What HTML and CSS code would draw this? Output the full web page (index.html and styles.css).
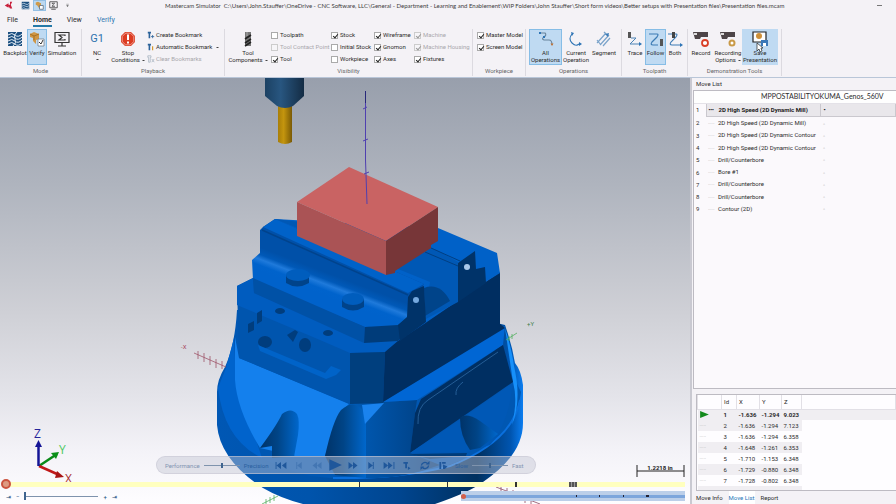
FILE: index.html
```html
<!DOCTYPE html>
<html lang="en">
<head>
<meta charset="utf-8">
<title>Mastercam Simulator</title>
<link rel="stylesheet" href="styles.css">
</head>
<body>
<div class="app">
  <header class="titlebar">
    <div class="quick">
      <svg class="qi" viewBox="0 0 12 12"><path d="M1 6l5-3v2h2V1h3L9 5l2 5H8L6 7v2z" fill="#c8203c"/></svg>
      <button class="qb" aria-label="Backplot"><svg class="qi" viewBox="0 0 12 12"><path d="M1 1h10v10H1z" fill="#1d5080"/><path d="M1 4q3-2 5 0t5-1M1 7q3-2 5 0t5-1M1 10q3-2 5 0t5-1" stroke="#dbe7f2" fill="none"/></svg></button>
      <button class="qb on" aria-label="Verify"><svg class="qi" viewBox="0 0 12 12"><path d="M1 2l3-1 4 2v5L5 9 3 6 1 5z" fill="#cf9a4a"/><path d="M6 6h5v5H6z" fill="#fff" stroke="#567"/></svg></button>
      <button class="qb" aria-label="Simulation"><svg class="qi" viewBox="0 0 12 12"><path d="M1 1h10v8H1zM3 11h6M8 3H4l2 2-2 2h4" fill="none" stroke="#333"/></svg></button>
      <button class="qb" aria-label="Customize"><svg class="qi small" viewBox="0 0 12 12"><path d="M3 3h6M4 6h4L6 9z" fill="#555" stroke="#555"/></svg></button>
    </div>
    <h1 class="title">Mastercam Simulator&nbsp; C:\Users\John.Stauffer\OneDrive - CNC Software, LLC\General - Department - Learning and Enablement\WIP Folders\John Stauffer\Short form videos\Better setups with Presentation files\Presentation files.mcam</h1>
    <button class="minimize" aria-label="Minimize"></button>
  </header>

  <nav class="tabs">
    <a href="#file">File</a><a href="#home" class="active">Home</a><a href="#view">View</a><a href="#verify" class="context">Verify</a>
  </nav>

  <div class="ribbon">
    <section class="group g-mode">
      <div class="tools">
        <button class="big"><svg viewBox="0 0 16 16"><path d="M1 1h14v14H1z" fill="#1c4f80"/><path d="M1 4q4-3 7 0t7-1M1 7q4-3 7 0t7-1M1 10q4-3 7 0t7-1M1 13q4-3 7 0t7-1M10 1q-4 3-2 7t-2 7" stroke="#e6eef6" fill="none"/></svg><span>Backplot</span></button>
        <button class="big on"><svg viewBox="0 0 16 16"><path d="M1 3l4-2 5 2v5l-3 1v4l-3-3V7L1 6z" fill="#cf9645"/><path d="M1 3l4 2 5-2M5 5v4" stroke="#a87022" fill="none"/><path d="M9 8h6v7H9z" fill="#fff" stroke="#6a7480" stroke-width=".7"/><path d="M10 11l2 2 2-4" stroke="#333" fill="none"/></svg><span>Verify</span></button>
        <button class="big"><svg viewBox="0 0 16 16"><path d="M1 1.500h14v10H1zM4 15h8M8 12v3M11 5V4H5l3 2.500L5 9h6V8" fill="none" stroke="#333" stroke-width="1.200"/></svg><span>Simulation</span></button>
      </div>
      <h2>Mode</h2>
    </section>
    <section class="group g-play">
      <div class="tools">
        <button class="big"><b class="g1">G1</b><span>NC<i class="caret below"></i></span></button>
        <button class="big"><svg viewBox="0 0 16 16"><path d="M5 1h6l4 4v6l-4 4H5l-4-4V5z" fill="#dc3c22"/><path d="M5.500 2.200h5l3.300 3.300v5l-3.300 3.300h-5l-3.300-3.300v-5z" fill="none" stroke="#fff" stroke-width=".5"/><path d="M8 3.500v5.500M8 10.500v2" stroke="#fff" stroke-width="2"/></svg><span>Stop<br>Conditions<i class="caret"></i></span></button>
        <div class="stack">
          <button class="line"><svg viewBox="0 0 10 10"><path d="M1 1h4v2H4v6H2V3H1z" fill="#2b6299"/><path d="M5 7h4M7 5v4" stroke="#2b6299"/></svg>Create Bookmark</button>
          <button class="line"><svg viewBox="0 0 10 10"><path d="M1 1h4v2H4v6H2V3H1z" fill="#2b6299"/><path d="M7 4v5" stroke="#d59a2e" stroke-width="1.500"/></svg>Automatic Bookmark<i class="caret wide"></i></button>
          <button class="line" disabled><svg viewBox="0 0 10 10"><path d="M1 1h4v2H4v6H2V3H1zM6 5l3 4M9 5L6 9" fill="none" stroke="#a9b5c2"/></svg>Clear Bookmarks</button>
        </div>
      </div>
      <h2>Playback</h2>
    </section>
    <section class="group g-vis">
      <div class="tools">
        <button class="big"><svg viewBox="0 0 16 16"><path d="M5 1h6v14H5z" fill="#777"/><path d="M5 8l6-4M5 12l6-4M5 15l6-4" stroke="#222" stroke-width="1.600"/><path d="M7 1v4" stroke="#aaa"/></svg><span>Tool<br>Components<i class="caret"></i></span></button>
        <div class="stack">
          <label><input type="checkbox">Toolpath</label>
          <label class="dim"><input type="checkbox" disabled>Tool Contact Point</label>
          <label><input type="checkbox" checked>Tool</label>
        </div>
        <div class="stack">
          <label><input type="checkbox" checked>Stock</label>
          <label><input type="checkbox">Initial Stock</label>
          <label><input type="checkbox">Workpiece</label>
        </div>
        <div class="stack">
          <label><input type="checkbox" checked>Wireframe</label>
          <label><input type="checkbox" checked>Gnomon</label>
          <label><input type="checkbox" checked>Axes</label>
        </div>
        <div class="stack">
          <label class="dim"><input type="checkbox" checked disabled>Machine</label>
          <label class="dim"><input type="checkbox" checked disabled>Machine Housing</label>
          <label><input type="checkbox" checked>Fixtures</label>
        </div>
      </div>
      <h2>Visibility</h2>
    </section>
    <section class="group g-work">
      <div class="tools">
        <div class="stack">
          <label><input type="checkbox" checked>Master Model</label>
          <label><input type="checkbox" checked>Screen Model</label>
        </div>
      </div>
      <h2>Workpiece</h2>
    </section>
    <section class="group g-ops">
      <div class="tools">
        <button class="big on"><svg viewBox="0 0 16 16"><path d="M2 2h5q2 2-1 4t0 3h5q3 0 3 5" fill="none" stroke="#68849c" stroke-width="1.100"/><path d="M1 1h2v2H1zM5 5h2v2H5z" fill="#2d74b5"/><path d="M12.500 12.500h3L14 15z" fill="#c07030"/></svg><span>All<br>Operations</span></button>
        <button class="big"><svg viewBox="0 0 16 16"><path d="M4 3Q0 8 4 12t7 1" fill="none" stroke="#2d74b5" stroke-width="1.100"/><path d="M3 1l3 1-2 3zM11 11l3 2-3 2z" fill="#2d74b5"/></svg><span>Current<br>Operation</span></button>
        <button class="big"><svg viewBox="0 0 16 16"><path d="M1 12L10 2M4 14l9-10M7 15l7-8M8 1l3 3M1 9l4 5" fill="none" stroke="#7aa3ca" stroke-width="1.200"/><path d="M9 3l4-1-1 4z" fill="#3c7cb8"/></svg><span>Segment</span></button>
      </div>
      <h2>Operations</h2>
    </section>
    <section class="group g-path">
      <div class="tools">
        <button class="big"><svg viewBox="0 0 16 16"><path d="M1 1h3v6H1z" fill="#555"/><path d="M4 7l5 0-6 6h10" fill="none" stroke="#4c83b5"/><path d="M12 11l3 2-3 2z" fill="#2d74b5"/></svg><span>Trace</span></button>
        <button class="big on"><svg viewBox="0 0 16 16"><path d="M1 3h8q2 0 0 3l-5 5q-2 3 1 3h5" fill="none" stroke="#3d7bb4" stroke-width="1.200"/><path d="M12 8h3v7h-3z" fill="#555"/></svg><span>Follow</span></button>
        <button class="big"><svg viewBox="0 0 16 16"><path d="M1 3h8q2 0 0 3l-5 5q-2 3 1 3h8" fill="none" stroke="#3d7bb4" stroke-width="1.100"/><path d="M5 1h3v6H5z" fill="#444"/><path d="M13 12l3 2-3 2z" fill="#2d74b5"/></svg><span>Both</span></button>
      </div>
      <h2>Toolpath</h2>
    </section>
    <section class="group g-demo">
      <div class="tools">
        <button class="big"><svg viewBox="0 0 16 16"><path d="M0 1h15v5H8L7 8H2z" fill="#4d4548"/><path d="M1 2h3v2H1z" fill="#ddd"/><circle cx="12" cy="12" r="3" fill="#fff" stroke="#d84028" stroke-width="1.800"/></svg><span>Record</span></button>
        <button class="big"><svg viewBox="0 0 16 16"><path d="M0 1h15v5H8L7 8H2z" fill="#4d4548"/><path d="M1 2h3v2H1z" fill="#ddd"/><circle cx="12" cy="12" r="2.500" fill="#fff" stroke="#c99a48" stroke-width="2"/></svg><span>Recording<br>Options<i class="caret"></i></span></button>
        <button class="big on plain"><svg viewBox="0 0 16 16"><path d="M1 1h13v10H1z" fill="#fff" stroke="#222" stroke-width="1.200"/><circle cx="7" cy="5" r="3" fill="#cf9038"/><path d="M9 9h7v6H9z" fill="#3b78b8"/><path d="M11 12h3v3h-3z" fill="#fff"/></svg><span>Save<br>Presentation</span>
          <svg class="pointer" viewBox="0 0 8 11"><path d="M1 1v8l2-2 1 3 2-1-1-3h2z" fill="#fff" stroke="#222" stroke-width=".7"/></svg></button>
      </div>
      <h2>Demonstration Tools</h2>
    </section>
  </div>

  <main class="work">
    <section class="viewport">
      <svg class="scene" viewBox="0 78 690 426" preserveAspectRatio="xMidYMin slice" role="img" aria-label="Vise and stock">
        <defs>
          <linearGradient id="bg" x1="0" y1="0" x2="0" y2="1"><stop offset="0" stop-color="#989fac"/><stop offset=".25" stop-color="#afb4be"/><stop offset=".55" stop-color="#cfd0d6"/><stop offset=".75" stop-color="#e4e4ea"/><stop offset=".88" stop-color="#f4f3f8"/><stop offset="1" stop-color="#fefdff"/></linearGradient>
          <linearGradient id="bowl" x1="217" x2="523" y1="0" y2="0" gradientUnits="userSpaceOnUse"><stop offset="0" stop-color="#0057b4"/><stop offset=".3" stop-color="#0054ac"/><stop offset=".6" stop-color="#00458f"/><stop offset=".85" stop-color="#00305f"/><stop offset=".96" stop-color="#0055b0"/><stop offset="1" stop-color="#0b7df0"/></linearGradient>
          <linearGradient id="holder"><stop offset="0" stop-color="#1c4163"/><stop offset=".4" stop-color="#285680"/><stop offset="1" stop-color="#142c44"/></linearGradient>
          <linearGradient id="cutter"><stop offset="0" stop-color="#a87e08"/><stop offset=".4" stop-color="#c4950e"/><stop offset="1" stop-color="#7a5a05"/></linearGradient>
          <linearGradient id="scoop"><stop offset="0" stop-color="#003368"/><stop offset=".45" stop-color="#004486"/><stop offset="1" stop-color="#0067cc"/></linearGradient>
          <linearGradient id="groove" x1="325" y1="272" x2="317" y2="293" gradientUnits="userSpaceOnUse"><stop offset="0" stop-color="#0050a8"/><stop offset=".3" stop-color="#0059b8"/><stop offset=".5" stop-color="#1f7adb"/><stop offset=".75" stop-color="#0063cc"/><stop offset="1" stop-color="#0062cb"/></linearGradient>
          <linearGradient id="mid"><stop offset="0" stop-color="#005cb8"/><stop offset="1" stop-color="#003c7c"/></linearGradient>
        </defs>
        <path d="M0 78h690v426H0z" fill="url(#bg)"/>

        <!-- rotary base -->
        <path d="M237 310Q235 345 225 367Q217 380 217 392V425Q220 460 263 488Q280 498 303 504H435Q470 492 483 482Q523 455 523 423V385Q521 370 515 363Q512 345 505 325L400 300z" fill="url(#bowl)"/>
        <path d="M218 390Q222 455 310 476Q375 485 440 468Q515 445 521 392L500 350 240 350z" fill="#0057b2"/>
        <path d="M218 388Q224 440 262 458L236 380 234 338 226 368z" fill="#0063cc"/>
        <path d="M333 478Q400 479 450 466Q512 442 520 400" fill="none" stroke="#0a70de" stroke-width="2"/>
        <path d="M505 328Q512 350 514 366Q522 400 512 425Q518 400 513 382z" fill="#1790fa"/>
        <path d="M235 337L239 358 349 404Q341 411 337 420L325 456H295L260 448Q237 410 235 380z" fill="#1480ed"/>
        <path d="M260 448Q277 425 282 414Q291 407 297 414Q300 420 298 435L294 457 272 458 272 446z" fill="url(#scoop)"/>
        <path d="M349 404L417 400 415 413 410 453 440 465Q400 480 366 478L362 410z" fill="url(#mid)"/>
        <path d="M325 456Q333 420 341 410Q352 400 361 408Q366 414 366 425V478L335 475z" fill="url(#scoop)"/>
        <path d="M362 405L384 403 365 424z" fill="#1a83ee"/>
        <path d="M505 326L383 402 417 400 503 345z" fill="#0066d4"/>
        <path d="M503 345L513 382 410 453 415 413 421 399z" fill="#002f62"/>
        <path d="M418 424Q417 407 428 400L498 352M456 395Q455 388 463 382" fill="none" stroke="#245d96"/>
        <path d="M513 383L460 420 410 453 467 452 490 445Q508 425 513 383z" fill="#0058b6"/>
        <path d="M460 418Q466 412 480 421L498 434 480 448 470 450Q460 436 460 418z" fill="url(#scoop)"/>
        <path d="M410 454L467 453 466 456 430 459z" fill="#003c7a"/>

        <!-- lower block -->
        <path d="M237 286L253 278 400 320 385 352 350 404 239 358z" fill="#0055ae"/>
        <path d="M237 286L253 278 254 293 364 340 398 341 385 352 350 353 320 340 237 305z" fill="#005cbf"/>
        <path d="M350 353L385 352 383 403 350 404z" fill="#003f7e"/>
        <path d="M500 272L500 324 505 328 383 402 385 352 398 341 400 326 458 300z" fill="#002e61"/>
        <g fill="#003d7d">
          <path d="M257 313l5-3v11l-5 3zM248 324l6-3v9l-6 3z"/>
          <ellipse cx="280" cy="311" rx="5" ry="3"/><ellipse cx="328" cy="333" rx="5" ry="3"/>
          <ellipse cx="265" cy="342" rx="7" ry="6"/><ellipse cx="305" cy="345" rx="6" ry="7"/>
          <path d="M287 335l8-5 3 2-5 10z"/>
        </g>
        <path d="M258 345L325 373 331 366 341 370 336 375 326 379 260 351z" fill="#0063c8"/>

        <!-- vise body -->
        <path d="M275 219L438 228 497 253 500 273 484 283 424 324 398 341 300 290z" fill="#0061c8"/>
        <path d="M275 219L430 282 424 320 458 302 458 262 437 250 390 233z" fill="#0058b5"/>
        <path d="M424 288Q440 282 450 301L425 316z" fill="#00448a"/>
        <path d="M431 248L460 261M425 252L458 266" stroke="#003f82" fill="none"/>
        <path d="M252 260L260 253 260 230 263 227 275 219 424 284 408 318 398 325 365 327 253 280z" fill="url(#groove)"/>
        <path d="M263 227L275 219 424 284 408 293z" fill="#0062c9"/>
        <path d="M262 230L408 295" stroke="#00438c" stroke-width="1.500"/>
        <path d="M253 278L365 327 364 343 254 293z" fill="#0051a6"/>
        <path d="M365 327L398 325 408 317 425 317 398 341 364 343z" fill="#003c7a"/>
        <path d="M408 297L412 291 424 286 426 322 400 341 398 325 407 317z" fill="#003369"/>
        <path d="M458 263L475 251 476 269 485 267 486 283 458 302z" fill="#003369"/>
        <circle cx="416" cy="300" r="3" fill="#75a9df"/><circle cx="467" cy="267" r="3" fill="#a9c8ea"/>
        <g><path d="M286 275v8q11 7 23 0v-8z" fill="#00438a"/><ellipse cx="298" cy="275" rx="12" ry="6" fill="#005dbd"/>
        <path d="M342 299v8q11 7 22 0v-8z" fill="#00438a"/><ellipse cx="353" cy="299" rx="11" ry="6" fill="#005dbd"/></g>

        <!-- stock -->
        <path d="M349 167L438 207 386 241 297 202z" fill="#c96363"/>
        <path d="M297 202L386 241V275L297 236z" fill="#aa5355"/>
        <path d="M386 241L438 207V241L431 245V248L395 271V273L386 275z" fill="#773638"/>

        <!-- tool -->
        <path d="M278 104h14v38q-7 4-14 0z" fill="url(#cutter)"/>
        <path d="M265 78h39v18l-11 10q-8 4-16 0l-12-10z" fill="url(#holder)"/>

        <!-- axes -->
        <path d="M365.500 91V160L367 204M363 109l4-2M363 141l5-2M364 174l5-2" stroke="#5040b0" stroke-width="1" fill="none"/>
        <path d="M365 91h1v12h-1z" fill="#28287a"/>
        <path d="M194 353L226 367M198 351v8M204 353v9M210 356v9M216 359v9M222 361v8" stroke="#a0566a" stroke-width=".8" fill="none"/>
        <path d="M496 487L540 504M501 486v6M507 488v7M513 490v8M519 493v8M525 495v8M531 497v7" stroke="#8d4b64" stroke-width=".8" fill="none"/>
        <path d="M262 504L278 496M266 499v5M270 497v6M274 495v6M506 340L517 333M509 336v5M512 334v5" stroke="#54b060" stroke-width=".8" fill="none"/>
        <text x="181" y="349" class="axis" fill="#a84860">-X</text><text x="527" y="326" class="axis" fill="#3f7d48">+Y</text>
        <path d="M39 466L57 454" stroke="#0a8a18" stroke-width="2.500"/><path d="M51 453l8-1-3 7z" fill="#0a9018"/>
        <path d="M39 466L57 474" stroke="#c01818" stroke-width="2.500"/><path d="M57 471l7 6-9 1z" fill="#a81414"/>
        <path d="M38.500 466V446" stroke="#141496" stroke-width="2.500"/><path d="M35 447l3.500-7 3.500 7z" fill="#141496"/>
        <text x="34" y="438" class="gnomon" fill="#24249a">Z</text><text x="59" y="454" class="gnomon" fill="#4cc860">Y</text><text x="65" y="483" class="gnomon" fill="#a83030">X</text>
        <path d="M637 471H684M637 465v12M684 465v12" stroke="#222" fill="none"/>
        <text x="660" y="470" text-anchor="middle" class="scale">1.2218 in</text>
      </svg>

      <div class="overlay">
        <div class="player">
          <label class="speed">Performance<input type="range" aria-label="Performance to precision" value="50"><span>Precision</span></label>
          <div class="transport">
            <button aria-label="First"><svg viewBox="0 0 14 10"><path d="M1 1h1v8H1zM7 1v8L2 5zM13 1v8L8 5z"/></svg></button>
            <button aria-label="Previous" class="faint"><svg viewBox="0 0 14 10"><path d="M4 1h1v8H4zM10 1v8L5 5z"/></svg></button>
            <button aria-label="Rewind" class="faint"><svg viewBox="0 0 14 10"><path d="M7 1v8L2 5zM12 1v8L7 5z"/></svg></button>
            <button aria-label="Play"><svg viewBox="0 0 14 10" class="play"><path d="M2 0l11 5-11 5z"/></svg></button>
            <button aria-label="Forward"><svg viewBox="0 0 14 10"><path d="M2 1v8l5-4zM7 1v8l5-4z"/></svg></button>
            <button aria-label="Next"><svg viewBox="0 0 14 10"><path d="M4 1v8l5-4zM9 1h1v8H9z"/></svg></button>
            <button aria-label="Last"><svg viewBox="0 0 14 10"><path d="M1 1v8l5-4zM6 1v8l5-4zM12 1h1v8h-1z"/></svg></button>
            <button aria-label="Next tool"><svg viewBox="0 0 14 10"><path d="M3 1h5v2H7v5H5V3H3zM8 6l3 2-3 2z"/></svg></button>
            <button aria-label="Loop"><svg viewBox="0 0 14 10"><path d="M10 3A4 4 0 0 0 3 5M4 7a4 4 0 0 0 7-2" fill="none" stroke="#1f579b" stroke-width="1.500"/><path d="M8 4h4V0zM6 6H2v4z"/></svg></button>
            <button aria-label="Bookmark"><svg viewBox="0 0 14 10"><path d="M3 1h2v8H3zM6 1h4v2H6zM7 4l5 2-3 3H7z"/></svg></button>
          </div>
          <label class="speed"><span>Slow</span><input type="range" aria-label="Playback speed" value="50">Fast</label>
        </div>
        <div class="timeline"><i class="knob"></i><i class="mark m1"></i><i class="mark m2"></i><i class="mark m3"></i><i class="mark m4"></i></div>
        <div class="foot">
          <label class="zoombar"><span>⇥</span><span>−</span><input type="range" aria-label="Timeline zoom" value="0"><span>+</span><span>⇥</span></label>
          <div class="segment"><i class="dot"></i><i></i><i></i><i></i><i class="last"></i></div>
        </div>
      </div>
    </section>

    <aside class="panel">
      <h2>Move List</h2>
      <div class="moves">
        <table>
          <colgroup><col class="c-num"><col class="c-name"><col></colgroup>
          <thead><tr><th></th><th colspan="2">MPPOSTABILITYOKUMA_Genos_560V</th></tr></thead>
          <tbody>
            <tr class="sel"><td>1</td><td><i>•••</i>2D High Speed (2D Dynamic Mill)</td><td>•</td></tr>
            <tr><td>2</td><td><i>·····</i>2D High Speed (2D Dynamic Mill)</td><td>◦</td></tr>
            <tr><td>3</td><td><i>·····</i>2D High Speed (2D Dynamic Contour</td><td>◦</td></tr>
            <tr><td>4</td><td><i>·····</i>2D High Speed (2D Dynamic Contour</td><td>◦</td></tr>
            <tr><td>5</td><td><i>·····</i>Drill/Counterbore</td><td>◦</td></tr>
            <tr><td>6</td><td><i>·····</i>Bore #1</td><td>◦</td></tr>
            <tr><td>7</td><td><i>·····</i>Drill/Counterbore</td><td>◦</td></tr>
            <tr><td>8</td><td><i>·····</i>Drill/Counterbore</td><td>◦</td></tr>
            <tr><td>9</td><td><i>·····</i>Contour (2D)</td><td>◦</td></tr>
          </tbody>
        </table>
      </div>
      <div class="points">
        <table>
          <thead><tr><th></th><th>Id</th><th>X</th><th>Y</th><th>Z</th><th></th></tr></thead>
          <tbody>
            <tr class="sel"><td><svg viewBox="0 0 10 8"><path d="M0 0l10 4-10 4z" fill="#138a1c"/></svg></td><td>1</td><td>-1.636</td><td>-1.294</td><td>9.023</td><td></td></tr>
            <tr><td>·····</td><td>2</td><td>-1.636</td><td>-1.294</td><td>7.123</td><td></td></tr>
            <tr><td>·····</td><td>3</td><td>-1.636</td><td>-1.294</td><td>6.358</td><td></td></tr>
            <tr><td>·····</td><td>4</td><td>-1.648</td><td>-1.261</td><td>6.353</td><td></td></tr>
            <tr><td>·····</td><td>5</td><td>-1.710</td><td>-1.153</td><td>6.348</td><td></td></tr>
            <tr><td>·····</td><td>6</td><td>-1.729</td><td>-0.880</td><td>6.348</td><td></td></tr>
            <tr><td>·····</td><td>7</td><td>-1.728</td><td>-0.802</td><td>6.348</td><td></td></tr>
            <tr><td>·····</td><td>8</td><td>-1.727</td><td>-0.724</td><td>6.348</td><td></td></tr>
          </tbody>
        </table>
      </div>
      <nav class="paneltabs"><a href="#info">Move Info</a><a href="#list" class="active">Move List</a><a href="#report">Report</a></nav>
    </aside>
  </main>
</div>
</body>
</html>
```
FILE: styles.css
```css
* { box-sizing: border-box; }
body { margin: 0; font: 6px/9px Roboto, "Open Sans", sans-serif; color: #2c2c2c; background: #f4f2f6; }
button { font: inherit; color: inherit; background: none; border: 0; padding: 0; }
a { color: inherit; text-decoration: none; }
h1, h2 { margin: 0; font-weight: 400; font-size: 6px; }
i { font-style: normal; }
.app { height: 100vh; display: flex; flex-direction: column; overflow: hidden; }

.titlebar { flex: none; height: 11px; display: flex; align-items: center; }
.quick { display: flex; height: 11px; align-items: center; gap: 1px; padding-left: 2px; width: 165px; flex: none; }
.qi { width: 9px; height: 9px; display: block; margin: 0 auto; }
.qi.small { width: 5px; height: 5px; }
.qb { width: 13px; height: 11px; }
.quick > .qi { margin: 0 5px 0 2px; }
.qb.on { background: #bcd8f0; border: 1px solid #93bfe4; }
.title { font-family: Lato, Roboto, sans-serif; white-space: nowrap; color: #3c3c3c; flex: 1; overflow: hidden; }
.minimize { width: 5px; height: 1px; background: #777; margin-right: 14px; flex: none; }

.tabs { flex: none; height: 17px; display: flex; gap: 15px; padding: 4px 0 0 7px; font-size: 7px; line-height: 10px; }
.tabs a { height: 12px; }
.tabs .active { font-weight: 700; border-bottom: 2px solid #2479a8; }
.tabs .context { color: #2f78b2; }

.ribbon { flex: none; height: 50px; display: flex; border-bottom: 1px solid #b9c6d8; }
.group { display: flex; flex-direction: column; height: 47px; margin-top: 1px; border-right: 1px solid #dcdae0; flex: none; }
.group h2 { text-align: center; color: #666; line-height: 10px; white-space: nowrap; }
.tools { display: grid; height: 37px; align-items: start; }
.g-mode { width: 82px; } .g-mode .tools { grid-template-columns: 24px 20px 30px; padding-left: 3px; }
.g-play { width: 143px; } .g-play .tools { grid-template-columns: 30px 32px 78px; }
.g-vis { width: 248px; } .g-vis .tools { grid-template-columns: 46px 60px 43px 40px 58px; }
.g-work { width: 53px; } .g-work .tools { padding-left: 4px; }
.g-ops { width: 96px; } .g-ops .tools { grid-template-columns: 33px 28px 28px; padding-left: 3px; }
.g-path { width: 66px; } .g-path .tools { grid-template-columns: 20px 21px 18px; padding-left: 3px; }
.g-demo { width: 94px; } .g-demo .tools { grid-template-columns: 26px 26px 36px; column-gap: 1px; }

.big { height: 36px; display: flex; flex-direction: column; align-items: center; position: relative; white-space: nowrap; line-height: 7px; padding-top: 1px; border: 1px solid transparent; }
.big > span { margin-top: 2px; }
.big > svg, .g1 { width: 16px; height: 16px; flex: none; }
.g1 { font-weight: 400; font-size: 11px; line-height: 16px; color: #2c72ae; }
.big.on { background: #bfdaf2; border-color: #86bde6; }
.big.plain { border-color: #bfdaf2; }
.big > .pointer { position: absolute; width: 8px; height: 11px; left: 13px; top: 12px; }
.caret { display: inline-block; border: 1px solid transparent; border-top-color: #444; border-bottom: 0; width: 3px; margin-left: 2px; vertical-align: middle; }
.caret.below { display: block; margin: 3px auto 0; }
.caret.wide { margin-left: 3px; }
.stack { display: grid; grid-auto-rows: 12px; align-items: center; white-space: nowrap; }
.stack label, .line { display: flex; align-items: center; gap: 2px; line-height: 8px; }
.line { gap: 1px; text-align: left; padding-left: 3px; }
.line svg { width: 8px; height: 8px; }
.dim, .line:disabled { color: #a9a7ac; }
input[type=checkbox] { appearance: none; margin: 0; width: 7px; height: 7px; border: 1px solid #aaa; background: #fff; position: relative; flex: none; }
input[type=checkbox]:checked::before { content: ""; position: absolute; left: 2px; top: 0; width: 2px; height: 4px; border: solid #222; border-width: 0 1px 1px 0; transform: rotate(40deg); }
input[type=checkbox]:disabled { border-color: #ccc; background: #f6f5f8; }
input[type=checkbox]:disabled::before { border-color: #999; }

.work { flex: 1; min-height: 0; display: flex; }
.viewport { flex: 1; min-width: 0; position: relative; display: flex; flex-direction: column; justify-content: flex-end; overflow: hidden; }
.scene { position: absolute; inset: 0; width: 100%; height: 100%; }
.axis { font: 6px Roboto, sans-serif; }
.gnomon { font: 12px "Open Sans", sans-serif; }
.scale { font: 700 6px Roboto, sans-serif; fill: #222; }
.overlay { position: relative; }
.player { width: 55%; margin: 0 auto 8px 156px; height: 18px; border-radius: 9px; background: rgba(196, 198, 210, .45); border: 1px solid rgba(200, 200, 212, .6); display: flex; align-items: center; justify-content: space-between; padding: 0 11px 0 8px; color: #8294b2; }
.speed { display: flex; align-items: center; gap: 4px; }
.speed span { color: #2a5f9f; }
.player input { width: 36px; }
input[type=range] { appearance: none; background: linear-gradient(#7f93ad, #7f93ad) center / 100% 1px no-repeat; height: 8px; margin: 0; }
input[type=range]::-webkit-slider-thumb { appearance: none; width: 2px; height: 5px; background: #3f648f; }
.transport { display: flex; gap: 3px; }
.transport button { width: 15px; height: 12px; display: grid; place-items: center; }
.transport svg { width: 14px; height: 9px; fill: #1f579b; overflow: visible; }
.transport .play { height: 12px; width: 16px; }
.transport .faint { opacity: .35; }
.timeline { height: 5px; background: #ffffbf; margin: 0 5px; position: relative; }
.timeline i { position: absolute; top: 0; height: 5px; width: 1px; background: #333; }
.timeline .knob { left: -4px; top: -3px; width: 10px; height: 10px; border-radius: 5px; background: #dd9a82; border: 2px solid #cb5440; }
.timeline .m1 { left: 52%; } .timeline .m2 { left: 65%; } .timeline .m3 { left: 75%; width: 2px; }
.timeline .m4 { left: 83%; width: 8px; background: repeating-linear-gradient(90deg, #555 0 2px, #999 2px 3px); }
.foot { display: flex; align-items: center; justify-content: space-between; height: 17px; padding: 1px 5px 0 6px; }
.zoombar { display: flex; align-items: center; gap: 5px; color: #24507c; }
.zoombar input { width: 74px; }
.zoombar input::-webkit-slider-thumb { height: 8px; }
.segment { width: 33%; height: 10px; background: linear-gradient(#bccfe9 4px, #7da6dc 4px 7px, #bccfe9 7px); display: flex; align-items: center; justify-content: space-between; padding-right: 36px; }
.segment i { width: 1px; height: 2px; background: #223; }
.segment .dot { width: 5px; height: 5px; border-radius: 3px; background: #d4604a; margin-right: 88px; }
.segment .last { width: 3px; }

.panel { width: 206px; flex: none; display: flex; flex-direction: column; border-left: 2px solid #c9c9d1; padding-left: 1px; }
.panel h2 { height: 12px; line-height: 12px; padding-left: 3px; }
.moves { flex: 1; background: #fbf9fc; border: 1px solid #bdbbc2; border-right: 0; }
table { width: 100%; border-collapse: collapse; table-layout: fixed; }
td, th { padding: 0; font-weight: 400; text-align: left; white-space: nowrap; overflow: hidden; line-height: 9px; }
.c-num { width: 12px; }
.c-name { width: 114px; }
.moves table { height: 124px; }
.moves th { background: #fefefe; border-bottom: 1px solid #e4e2e8; height: 12px; }
.moves th + th { font-family: Lato, Roboto, sans-serif; font-size: 7px; padding-left: 55px; }
.moves td:first-child { padding-left: 2px; }
.moves td:nth-child(2) { padding-left: 2px; }
.moves td:last-child { padding-left: 3px; color: #999; }
.moves td i { display: inline-block; width: 10px; font-size: 5px; color: #aaa; }
.moves .sel td, .moves .sel i { color: #222; }
.moves .sel td:nth-child(n+2) { font-weight: 700; background: #e9e7eb; border: 1px solid #cac8ce; }

.points { height: 97px; flex: none; margin: 5px 0 0 3px; background: #fefdff; border: 1px solid #bdbbc2; border-right: 0; overflow: hidden; }
.points tr { height: 11px; }
.points thead tr { height: 14px; }
.points tbody tr:nth-child(even) td:nth-child(-n+5), .points tbody tr.sel td { background: #f0eef2; }
.points th { border: 1px solid #e2e0e6; border-top: 0; padding-left: 2px; }
.points th:nth-child(1) { width: 24px; } .points th:nth-child(2) { width: 15px; } .points th:nth-child(3) { width: 23px; } .points th:nth-child(4) { width: 22px; } .points th:nth-child(5) { width: 20px; }
.points td { padding-left: 2px; }
.points td:first-child { color: #aaa; font-size: 5px; }
.points td svg { width: 9px; height: 7px; display: block; }
.points .sel td { font-weight: 700; }
.paneltabs { flex: none; display: flex; gap: 6px; height: 13px; line-height: 13px; padding-left: 3px; }
.paneltabs .active { color: #1e77b8; background: #fff; }
```
